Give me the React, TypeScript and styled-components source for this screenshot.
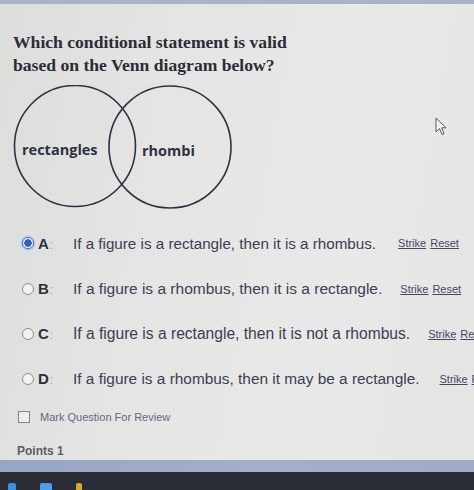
import React from 'react'
import styled, { createGlobalStyle } from 'styled-components'

const GlobalStyle = createGlobalStyle`
    html, body {
        margin: 0;
        padding: 0;
        width: 474px;
        height: 490px;
        overflow: hidden;
    }
    body {
        font-family: 'Liberation Sans', Arial, sans-serif;
    }
`

interface OptionRowProps {
    size: number
    height: number
}

interface RadioProps {
    checked: boolean
}

const Screen = styled.div`
    width: 474px;
    height: 490px;
    display: flex;
    flex-direction: column;
    overflow: hidden;
    background: linear-gradient(100deg, #dcdedb 0%, #e5e6e3 35%, #e9eae7 70%, #e4e5e3 100%);
`

const TopBar = styled.div`
    height: 4px;
    background: #a9b3c8;
    flex-shrink: 0;
`

const Content = styled.div`
    flex: 1;
    min-height: 0;
    overflow: hidden;
    display: flex;
    flex-direction: column;
    padding: 27px 0 0 13px;
`

const Question = styled.h1`
    margin: 0;
    font-family: 'Liberation Serif', 'DejaVu Serif', serif;
    font-weight: bold;
    font-size: 17.6px;
    line-height: 23px;
    color: #2b2c38;
`

const DiagramRow = styled.div`
    display: flex;
    justify-content: space-between;
    align-items: flex-start;
    height: 136px;
    margin-top: 8px;
`

const Cursor = styled.svg`
    margin: 32px 27px 0 0;
`

const Options = styled.div`
    display: flex;
    flex-direction: column;
    margin-top: -1px;
`

const OptionRow = styled.div<OptionRowProps>`
    display: flex;
    align-items: center;
    height: ${p => p.height}px;
    font-size: ${p => p.size}px;
    color: #3a3e56;
    white-space: nowrap;
`

const Radio = styled.span<RadioProps>`
    box-sizing: border-box;
    width: 12px;
    height: 12px;
    border-radius: 50%;
    margin-left: 9px;
    border: 1px solid ${p => p.checked ? '#3566c8' : '#8a8e98'};
    background: ${p => p.checked ? 'radial-gradient(circle, #2a5fd0 0 3.5px, #ffffff 4px)' : '#f2f2f0'};
    box-shadow: ${p => p.checked ? '0 0 2px 1px #9db8ec' : 'none'};
    flex-shrink: 0;
`

const Letter = styled.span`
    width: 35px;
    flex-shrink: 0;
    margin-left: 4px;
    font-weight: bold;
    font-size: 15px;
    color: #2c2e3c;
`

const Colon = styled.span`
    font-weight: normal;
    color: #9aa0aa;
    font-size: 12px;
    margin-left: 1px;
`

const Statement = styled.span`
    flex-shrink: 0;
`

const Links = styled.span<{ shift: number }>`
    display: flex;
    flex-shrink: 0;
    gap: 4px;
    margin-left: ${p => p.shift}px;
    font-size: 11px;
`

const Link = styled.span`
    color: #3f4766;
    text-decoration: underline;
`

const ReviewRow = styled.label`
    display: flex;
    align-items: center;
    gap: 10px;
    margin: 10px 0 0 5px;
    font-size: 11px;
    color: #5b6a86;
`

const Box = styled.span`
    box-sizing: border-box;
    width: 12px;
    height: 12px;
    border: 1px solid #80858f;
    background: #eeeeec;
`

const Points = styled.div`
    margin: 21px 0 0 4px;
    font-size: 12px;
    font-weight: bold;
    color: #5a5d66;
`

const BottomBar = styled.div`
    height: 12px;
    background: linear-gradient(90deg, #98a6c6, #a3afca 60%, #9eaac6);
    flex-shrink: 0;
`

const Taskbar = styled.div`
    height: 18px;
    display: flex;
    align-items: flex-end;
    gap: 24px;
    padding: 0 0 0 8px;
    background: #2a2d36;
    flex-shrink: 0;
`

const TaskIcon = styled.span<{ tone: string; w: number }>`
    width: ${p => p.w}px;
    height: 7px;
    border-radius: 2px 2px 0 0;
    background: ${p => p.tone};
`

const options = [
    { key: 'A', text: 'If a figure is a rectangle, then it is a rhombus.', size: 15.2, shift: 22, height: 46, checked: true },
    { key: 'B', text: 'If a figure is a rhombus, then it is a rectangle.', size: 15.5, shift: 18, height: 45, checked: false },
    { key: 'C', text: 'If a figure is a rectangle, then it is not a rhombus.', size: 15.6, shift: 18, height: 45, checked: false },
    { key: 'D', text: 'If a figure is a rhombus, then it may be a rectangle.', size: 15.4, shift: 20, height: 45, checked: false },
]

const Venn: React.FC = () => (
    <svg width="240" height="136" viewBox="0 0 240 136">
        <circle cx="62" cy="61" r="60.5" fill="none" stroke="#2e3142" strokeWidth="1.6" />
        <circle cx="157" cy="62" r="61" fill="none" stroke="#2e3142" strokeWidth="1.6" />
        <text x="9" y="70" fontFamily="'Open Sans', 'Noto Sans', sans-serif" fontWeight="bold" fontSize="14.5" fill="#2e3142">rectangles</text>
        <text x="129" y="71" fontFamily="'Open Sans', 'Noto Sans', sans-serif" fontWeight="bold" fontSize="14.5" fill="#2e3142">rhombi</text>
    </svg>
)

export default function App() {
    return <React.Fragment>
        <GlobalStyle />
        <Screen>
            <TopBar />
            <Content>
                <Question>
                    Which conditional statement is valid<br />
                    based on the Venn diagram below?
                </Question>
                <DiagramRow>
                    <Venn />
                    <Cursor width="12" height="19" viewBox="0 0 12 19">
                        <path d="M1 1 L1 15 L4.5 11.5 L7 17.5 L9 16.6 L6.6 10.8 L11 10.8 Z" fill="#f4f4f4" stroke="#555a64" strokeWidth="1" strokeLinejoin="round" />
                    </Cursor>
                </DiagramRow>
                <Options>
                    {options.map(o => (
                        <OptionRow key={o.key} size={o.size} height={o.height}>
                            <Radio checked={o.checked} />
                            <Letter>{o.key}<Colon>:</Colon></Letter>
                            <Statement>{o.text}</Statement>
                            <Links shift={o.shift}>
                                <Link>Strike</Link>
                                <Link>Reset</Link>
                            </Links>
                        </OptionRow>
                    ))}
                </Options>
                <ReviewRow>
                    <Box />
                    Mark Question For Review
                </ReviewRow>
                <Points>Points 1</Points>
            </Content>
            <BottomBar />
            <Taskbar>
                <TaskIcon tone="#3d8fe0" w={8} />
                <TaskIcon tone="#4f9ee8" w={12} />
                <TaskIcon tone="#d9a830" w={6} />
            </Taskbar>
        </Screen>
    </React.Fragment>
}
